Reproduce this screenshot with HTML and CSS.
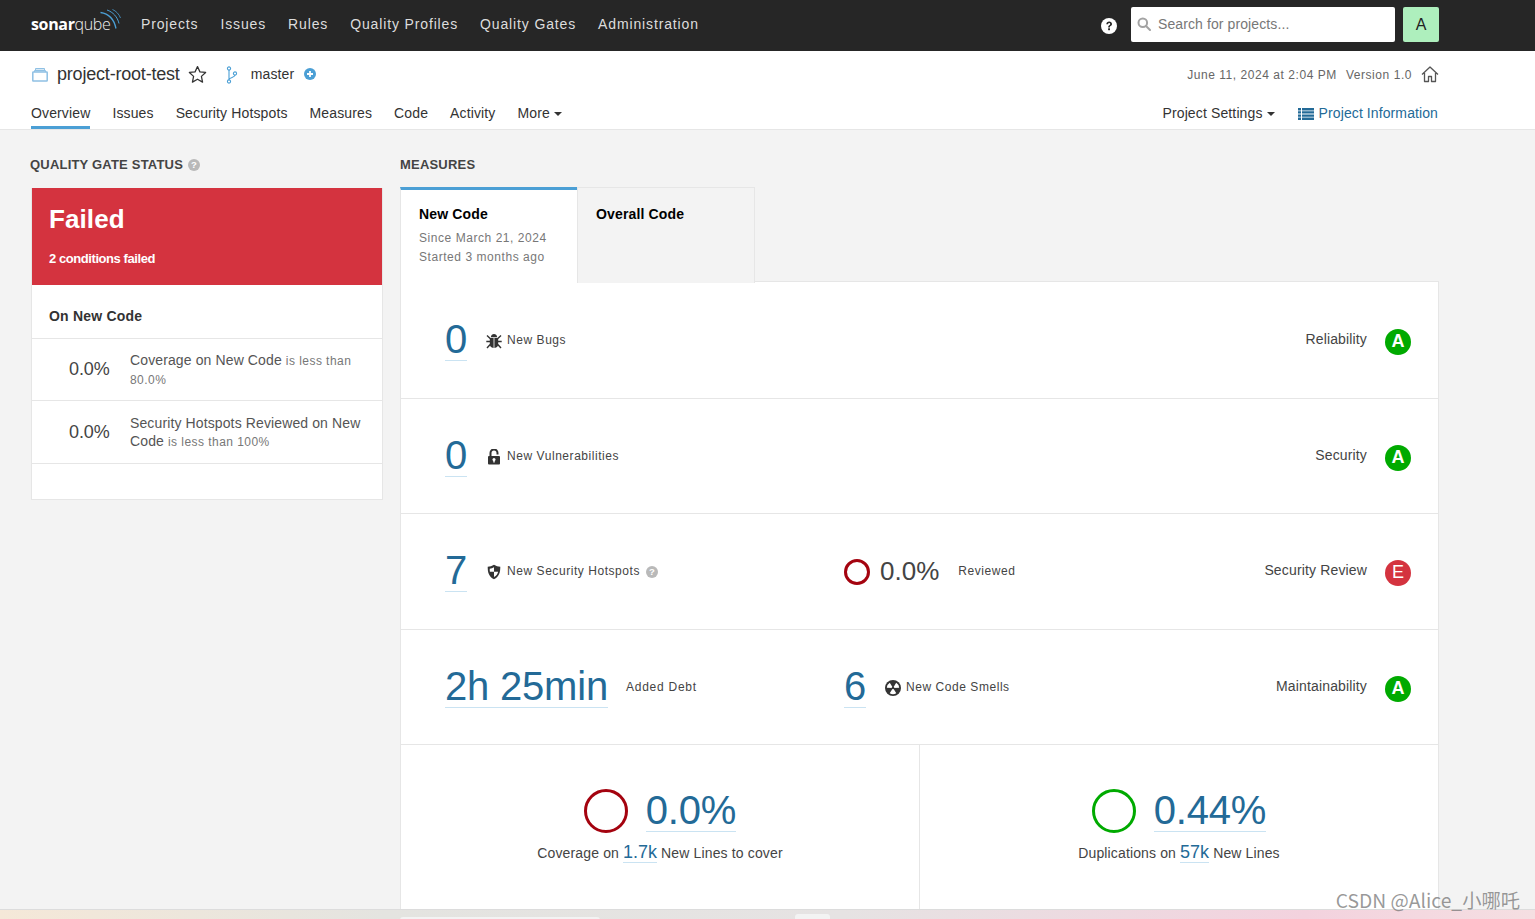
FILE: index.html
```html
<!DOCTYPE html>
<html lang="en">
<head>
<meta charset="utf-8">
<title>project-root-test - SonarQube</title>
<link rel="stylesheet" href="styles.css">
</head>
<body>
<div class="page">
  <header class="topbar">
    <div class="logo"><span class="logo-b">sonar</span><span class="logo-l">qube</span>
      <svg class="logo-waves" viewBox="0 0 21 20" width="21" height="20" fill="none" stroke="#4b9fd5"><path d="M.5 3.500C8 4.500 14 10 16 19.500" stroke-width="1.300"/><path d="M7 1C13 3 17.500 8 19 14.500" stroke-width="1"/><path d="M12.500 .5C16 2 19 5 20.500 9" stroke-width=".8"/></svg>
    </div>
    <nav class="topnav"><a>Projects</a><a>Issues</a><a>Rules</a><a>Quality Profiles</a><a>Quality Gates</a><a>Administration</a></nav>
    <div class="top-right">
      <svg class="help" viewBox="0 0 16 16" width="16" height="16"><circle cx="8" cy="8" r="8" fill="#fff"/><path d="M5.300 6.200C5.400 4.500 6.600 3.500 8.200 3.500 9.800 3.500 11 4.500 11 5.900 11 7 10.400 7.500 9.600 8 9 8.400 8.900 8.700 8.900 9.400H7.200C7.200 8.200 7.500 7.700 8.300 7.200 8.900 6.800 9.200 6.500 9.200 6 9.200 5.400 8.800 5.100 8.200 5.100 7.500 5.100 7.100 5.500 7 6.200Z" fill="#262626"/><rect x="7.100" y="10.300" width="1.900" height="1.900" fill="#262626"/></svg>
      <div class="search">
        <svg viewBox="0 0 14 14" width="14" height="14" fill="none" stroke="#a3a3a3" stroke-width="2"><circle cx="5.800" cy="5.800" r="4.300"/><path d="M9 9l4 4" stroke-linecap="round"/></svg>
        <span>Search for projects...</span>
      </div>
      <div class="avatar">A</div>
    </div>
  </header>

  <section class="comp">
    <div class="comp-top">
      <svg class="qp" viewBox="0 0 16 16" width="16" height="16" fill="none" stroke="#8fc0e4"><path d="M3.500 6V2.500h9V6" fill="#d5e8f5"/><path d="M2.500 6V4.500h11V6" fill="#d5e8f5"/><rect x=".8" y="6" width="14.400" height="9" rx=".5" fill="#fff" stroke-width="1.500"/></svg>
      <span class="comp-name">project-root-test</span>
      <svg class="star" viewBox="0 0 18 18" width="19" height="19" fill="none" stroke="#333" stroke-width="1.200" stroke-linejoin="round"><path d="M9 1.500l2.300 5 5.400.6-4 3.700 1.100 5.400L9 13.500l-4.800 2.700 1.100-5.400-4-3.700 5.400-.6Z"/></svg>
      <svg class="branch" viewBox="0 0 12 18" width="12" height="18" fill="none" stroke="#4b9fd5" stroke-width="1.100"><circle cx="3" cy="2.500" r="1.600"/><circle cx="3" cy="15.500" r="1.600"/><circle cx="9" cy="7.500" r="1.600"/><path d="M3 4.100v9.800M9 9.100c0 2.500-4.500 2-6 4"/></svg>
      <span class="branch-name">master</span>
      <svg class="plus" viewBox="0 0 12 12" width="12" height="12"><circle cx="6" cy="6" r="6" fill="#4b9fd5"/><path d="M3 6h6M6 3v6" stroke="#fff" stroke-width="1.800"/></svg>
      <div class="meta"><span>June 11, 2024 at 2:04 PM</span><span>Version 1.0</span>
        <svg viewBox="0 0 18 18" width="18" height="18" fill="none" stroke="#555" stroke-width="1.300" stroke-linejoin="round"><path d="M1 9.500L9 2l8 7.500M3.500 8v8.500h4v-5h3v5h4V8"/></svg>
      </div>
    </div>
    <div class="comp-tabs">
      <a class="tab active">Overview</a><a class="tab">Issues</a><a class="tab">Security Hotspots</a><a class="tab">Measures</a><a class="tab">Code</a><a class="tab">Activity</a><a class="tab">More<i class="caret"></i></a>
      <div class="tabs-right">
        <a class="tab">Project Settings<i class="caret"></i></a>
        <a class="info">
          <svg viewBox="0 0 16 12" width="16" height="12" fill="#236a97"><path d="M0 0h3v2.400H0zM4 0h12v2.400H4zM0 3.200h3v2.400H0zM4 3.200h12v2.400H4zM0 6.400h3v2.400H0zM4 6.400h12v2.400H4zM0 9.600h3V12H0zM4 9.600h12V12H4z"/></svg>
          Project Information</a>
      </div>
    </div>
  </section>

  <main class="main">
    <aside class="left">
      <h3 class="title">QUALITY GATE STATUS <svg class="q" viewBox="0 0 12 12" width="12" height="12"><circle cx="6" cy="6" r="6" fill="#b9b9b9"/><text x="6" y="9.300" text-anchor="middle" class="q-t">?</text></svg></h3>
      <div class="gate">
        <div class="gate-head">
          <div class="failed">Failed</div>
          <div class="failed-sub">2 conditions failed</div>
        </div>
        <div class="on-new">On New Code</div>
        <div class="cond"><span class="cond-val">0.0%</span><span class="cond-txt"><span>Coverage on New Code</span> <small>is less than</small> <small>80.0%</small></span></div>
        <div class="cond cond-2"><span class="cond-val">0.0%</span><span class="cond-txt"><span>Security Hotspots Reviewed on New</span> <span>Code</span> <small>is less than 100%</small></span></div>
        <div class="gate-foot"></div>
      </div>
    </aside>

    <section class="right">
      <h3 class="title title-m">MEASURES</h3>
      <div class="mtabs">
        <div class="mtab on"><b>New Code</b><p>Since March 21, 2024</p><p>Started 3 months ago</p></div>
        <div class="mtab"><b>Overall Code</b></div>
      </div>
      <div class="board">
        <div class="row row-1">
          <div class="cell"><a class="big">0</a>
            <svg class="ic" viewBox="0 0 16 16" width="16" height="16" fill="#333"><path d="M4.800 4.200c.3-2 1.600-3.200 3.200-3.200s2.900 1.200 3.200 3.200Z"/><path d="M3.800 5h3.800v10C5 14.800 3.800 13 3.800 11ZM8.400 5h3.800v6c0 2-1.200 3.800-3.800 4Z"/><path d="M1 2.500l3.200 3M15 2.500l-3.200 3M.3 8.500h3.700M15.700 8.500H12M1 15l3.200-3.500M15 15l-3.200-3.500" stroke="#333" stroke-width="1.400" fill="none"/></svg>
            <span class="lab">New Bugs</span></div>
          <div class="rate"><span>Reliability</span><i class="badge a">A</i></div>
        </div>
        <div class="row">
          <div class="cell"><a class="big">0</a>
            <svg class="ic" viewBox="0 0 16 16" width="16" height="16"><path d="M4.500 7.500V4a3.500 3.500 0 0 1 7 0v1.500" fill="none" stroke="#333" stroke-width="2"/><rect x="2" y="7" width="12" height="8.500" rx="1" fill="#333"/><circle cx="8" cy="10.500" r="1.500" fill="#fff"/><rect x="7.300" y="10.500" width="1.400" height="3" fill="#fff"/></svg>
            <span class="lab">New Vulnerabilities</span></div>
          <div class="rate"><span>Security</span><i class="badge a">A</i></div>
        </div>
        <div class="row">
          <div class="cell"><a class="big">7</a>
            <svg class="ic" viewBox="0 0 16 16" width="16" height="16"><path d="M8 .8c2 1.300 4 1.800 6.300 2 0 5.500-1 10-6.300 12.400C2.700 12.800 1.700 8.300 1.700 2.800 4 2.600 6 2.100 8 .8Z" fill="#333"/><path d="M8 3.300v4.500H3.900c-.1-.9-.2-1.900-.2-3.100C5.300 4.500 6.700 4 8 3.300ZM8 7.800h4.100C11.700 10 10.400 11.900 8 13Z" fill="#fff"/></svg>
            <span class="lab">New Security Hotspots</span>
            <svg class="q q-row" viewBox="0 0 12 12" width="12" height="12"><circle cx="6" cy="6" r="6" fill="#b9b9b9"/><text x="6" y="9.300" text-anchor="middle" class="q-t">?</text></svg></div>
          <div class="cell cell-2"><i class="ring small red"></i><span class="plain">0.0%</span><span class="lab lab-rev">Reviewed</span></div>
          <div class="rate"><span>Security Review</span><i class="badge e">E</i></div>
        </div>
        <div class="row">
          <div class="cell"><a class="big">2h 25min</a><span class="lab lab-debt">Added Debt</span></div>
          <div class="cell cell-2"><a class="big">6</a>
            <svg class="ic" viewBox="0 0 16 16" width="16" height="16"><circle cx="8" cy="8" r="8" fill="#333"/><path d="M8 8L4.700 2.700A6.200 6.200 0 0 1 11.300 2.700ZM8 8l-6.200.3a6.200 6.200 0 0 0 3 5ZM8 8l3.200 5.300a6.200 6.200 0 0 0 3-5Z" fill="#fff" transform="rotate(180 8 8)"/><circle cx="8" cy="8" r="1.300" fill="#333"/></svg>
            <span class="lab">New Code Smells</span></div>
          <div class="rate"><span>Maintainability</span><i class="badge a">A</i></div>
        </div>
        <div class="row-bottom">
          <div class="half">
            <div class="half-top"><i class="ring large red"></i><a class="huge">0.0%</a></div>
            <div class="half-sub">Coverage on <a>1.7k</a> New Lines to cover</div>
          </div>
          <div class="half">
            <div class="half-top"><i class="ring large green"></i><a class="huge">0.44%</a></div>
            <div class="half-sub">Duplications on <a>57k</a> New Lines</div>
          </div>
        </div>
      </div>
    </section>
  </main>

  <footer class="strip"><span class="chip chip-1"></span><span class="chip chip-2"></span></footer>
  <div class="mark">CSDN @Alice_小哪吒</div>
</div>
</body>
</html>
```
FILE: styles.css
```css
* { box-sizing: border-box; }
html, body { margin: 0; height: 100%; overflow: hidden; }
body { font-family: "Liberation Sans", Arial, sans-serif; font-size: 14px; color: #333; background: #f3f3f3; }
a { color: inherit; text-decoration: none; }
h3, p { margin: 0; }
i { font-style: normal; }
.page { position: relative; height: 919px; display: flex; flex-direction: column; overflow: hidden; }

.topbar { flex: 0 0 51px; background: #262626; display: flex; align-items: center; padding: 0 96px 0 31px; }
.logo { position: relative; width: 110px; font-family: "Open Sans", "Liberation Sans", sans-serif; font-size: 16px; color: #fff; letter-spacing: -.35px; line-height: 20px; margin-bottom: 3px; }
.logo-b { font-weight: 700; }
.logo-l { font-weight: 300; color: #f0f0f0; }
.logo-waves { position: absolute; left: 69px; top: -5px; }
.topnav { display: flex; gap: 22px; color: #ddd; letter-spacing: .86px; font-size: 14px; margin-bottom: 4px; }
.top-right { margin-left: auto; display: flex; align-items: center; margin-bottom: 2px; }
.help { margin-right: 14px; margin-top: 2px; }
.search { width: 264px; height: 35px; background: #fff; border-radius: 2px; display: flex; align-items: center; gap: 7px; padding: 0 0 1px 6px; font-size: 14px; letter-spacing: .1px; color: #777; }
.avatar { width: 36px; height: 35px; margin-left: 8px; background: #aeefbd; border-radius: 2px; color: #222; font-size: 16px; display: flex; align-items: center; justify-content: center; }

.comp { flex: 0 0 79px; background: #fff; border-bottom: 1px solid #e6e6e6; padding: 0 96px 0 31px; }
.comp-top { height: 46px; display: flex; align-items: center; }
.qp { margin-left: 1px; }
.comp-name { font-size: 18px; letter-spacing: -.2px; margin-left: 9px; color: #333; }
.star { margin-left: 8px; }
.branch { margin-left: 19px; margin-top: 1px; }
.branch-name { margin-left: 13px; font-size: 14px; letter-spacing: .15px; }
.plus { margin-left: 10px; }
.meta { margin-left: auto; display: flex; align-items: center; gap: 9px; font-size: 12px; letter-spacing: .55px; color: #666; padding-top: 1px; }
.meta svg { margin-top: -1px; }
.comp-tabs { display: flex; align-items: flex-start; gap: 22px; height: 32px; }
.tab { display: block; height: 32px; padding-top: 8px; font-size: 14px; letter-spacing: .13px; color: #333; }
.tab.active { border-bottom: 3px solid #4b9fd5; }
.caret { display: inline-block; margin-left: 4px; vertical-align: 2px; border: 4.500px solid transparent; border-top-color: #333; border-bottom: 0; }
.tabs-right { margin-left: auto; display: flex; gap: 23px; padding-right: 1px; }
.info { display: flex; align-items: flex-start; gap: 5px; padding-top: 8px; letter-spacing: .1px; color: #236a97; }
.info svg { margin-top: 3px; }

.main { flex: 1; min-height: 0; display: flex; padding: 0 96px 0 31px; overflow: hidden; }
.title { font-size: 13px; font-weight: 700; letter-spacing: .2px; color: #444; padding-top: 27px; height: 56px; margin-left: -1px; }
.title-m { margin-left: 0; }
.title .q { vertical-align: -2px; margin-left: 1px; }
.left { width: 352px; margin-right: 17px; flex: none; }
.q-t { font: 700 9.500px "Liberation Sans", Arial, sans-serif; fill: #fff; }
.gate { margin-top: 2px; background: #fff; border: 1px solid #e6e6e6; border-top: 0; }
.gate-head { height: 97px; background: #d4333f; color: #fff; padding: 17px 17px 0; }
.failed { font-size: 26px; font-weight: 700; line-height: 29px; letter-spacing: .1px; }
.failed-sub { margin-top: 17px; font-size: 13px; font-weight: 700; letter-spacing: -.43px; line-height: 16px; }
.on-new { height: 54px; padding: 23px 17px 0; font-weight: 700; font-size: 14px; letter-spacing: .2px; line-height: 16px; border-bottom: 1px solid #e6e6e6; color: #333; }
.cond { height: 62px; display: flex; align-items: center; border-bottom: 1px solid #e6e6e6; }
.cond-2 { height: 63px; }
.cond-val { width: 98px; flex: none; padding-left: 37px; font-size: 18px; letter-spacing: -.1px; color: #444; }
.cond-txt { width: 236px; flex: none; font-size: 14px; letter-spacing: .12px; line-height: 18px; color: #555; }
.cond-txt small { font-size: 12px; letter-spacing: .45px; color: #777; }
.gate-foot { height: 35px; }

.right { flex: 1; min-width: 0; }
.mtabs { display: flex; height: 96px; margin-top: 1px; position: relative; z-index: 1; }
.mtab { width: 178px; border: 1px solid #e6e6e6; border-bottom: 0; padding: 17px 18px 0; background: #f3f3f3; }
.mtab.on { width: 177px; border: 0; border-top: 3px solid #4b9fd5; background: #fff; border-left: 1px solid #e6e6e6; padding-top: 15px; }
.mtab b { display: block; font-size: 14px; color: #000; letter-spacing: .15px; line-height: 18px; margin-bottom: 6px; }
.mtab p { font-size: 12px; letter-spacing: .55px; line-height: 19px; color: #777; }
.board { margin-top: -2px; background: #fff; border: 1px solid #e6e6e6; border-bottom: 0; height: 628px; }
.row { height: 115px; display: flex; align-items: flex-start; border-bottom: 1px solid #e6e6e6; padding: 37px 27px 0 44px; position: relative; }
.row-1 { height: 117px; padding-top: 38px; }
.row:nth-child(3) { height: 116px; }
.cell { display: flex; align-items: center; height: 41px; }
.cell-2 { position: absolute; left: 443px; top: 37px; }
.big { font-size: 40px; line-height: 38px; height: 41px; letter-spacing: -.2px; color: #236a97; border-bottom: 1px solid #cae3f2; }
.ic { margin-left: 19px; margin-right: 5px; flex: none; }
.lab { font-size: 12px; letter-spacing: .55px; color: #444; margin-bottom: 2px; }
.q-row { margin-left: 6px; }
.lab-debt { margin-left: 18px; letter-spacing: .75px; }
.lab-rev { margin-left: 19px; }
.plain { font-size: 26px; color: #444; margin-left: 10px; }
.ring { display: block; border-radius: 50%; flex: none; }
.ring.small { width: 26px; height: 26px; border: 3px solid #a4030f; }
.ring.large { width: 44px; height: 44px; border: 3px solid; }
.red.large { border-color: #a4030f; }
.green { border-color: #00aa00 !important; }
.rate { margin-left: auto; height: 41px; display: flex; align-items: center; gap: 18px; font-size: 14px; letter-spacing: .15px; color: #444; }
.rate span { margin-bottom: 3px; }
.badge { width: 26px; height: 26px; border-radius: 50%; color: #fff; display: flex; align-items: center; justify-content: center; font-size: 18px; letter-spacing: 0; margin-top: 2px; }
.badge.a { background: #00aa00; font-weight: 700; }
.badge.e { background: #d4333f; }
.row-bottom { display: flex; height: 165px; }
.half { flex: 1; text-align: center; padding-top: 44px; }
.half + .half { border-left: 1px solid #e6e6e6; }
.half-top { display: flex; justify-content: center; align-items: center; gap: 18px; height: 44px; }
.huge { font-size: 40px; line-height: 38px; height: 41px; letter-spacing: -.2px; color: #236a97; border-bottom: 1px solid #cae3f2; }
.half-sub { margin-top: 9px; font-size: 14px; letter-spacing: .14px; color: #444; }
.half-sub a { font-size: 18px; letter-spacing: 0; color: #236a97; border-bottom: 1px solid #cae3f2; }

.strip { position: relative; flex: 0 0 10px; border-top: 1px solid #dcdcdc; background: linear-gradient(90deg, #f5e8d8 0%, #e4e4e0 25%, #e6e3e3 55%, #f3d2de 85%, #f5dfe2 100%); }
.chip { position: absolute; display: block; background: #f3f3f3; border-radius: 3px 3px 0 0; }
.chip-1 { left: 400px; top: 7px; width: 200px; height: 3px; }
.chip-2 { left: 795px; top: 4px; width: 35px; height: 6px; }
.mark { position: absolute; right: 15px; bottom: 6px; font-family: "Noto Sans CJK SC", "Liberation Sans", sans-serif; font-size: 19.300px; line-height: 26px; color: rgba(120, 120, 120, .75); }
```
